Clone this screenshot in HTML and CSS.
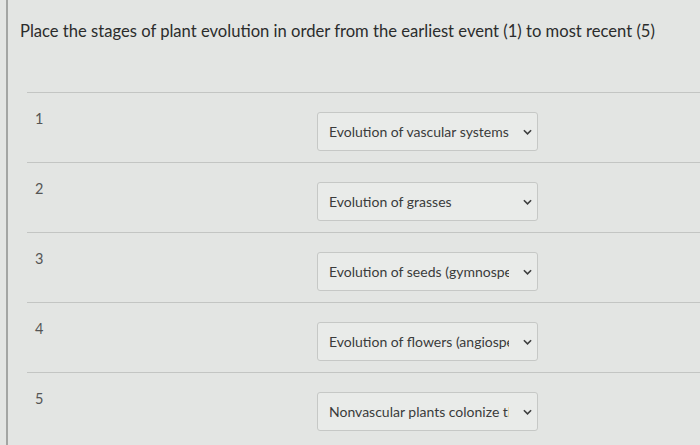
FILE: index.html
```html
<!DOCTYPE html>
<html lang="en">
<head>
  <meta charset="UTF-8" />
  <meta name="viewport" content="width=device-width, initial-scale=1.0"/>
  <title>Plant Evolution Ordering</title>
  <link rel="stylesheet" href="styles.css">
</head>
<body>
  <div class="question">
    <p class="question-text">Place the stages of plant evolution in order from the earliest event (1) to most recent (5)</p>

    <div class="answers">
      <div class="answer-row">
        <span class="num">1</span>
        <div class="dropdown">
          <span class="value">Evolution of vascular systems</span>
          <svg class="chevron" viewBox="0 0 10 6" width="9" height="6"><path d="M1 1l4 4 4-4" /></svg>
        </div>
      </div>
      <div class="answer-row">
        <span class="num">2</span>
        <div class="dropdown">
          <span class="value">Evolution of grasses</span>
          <svg class="chevron" viewBox="0 0 10 6" width="9" height="6"><path d="M1 1l4 4 4-4" /></svg>
        </div>
      </div>
      <div class="answer-row">
        <span class="num">3</span>
        <div class="dropdown">
          <span class="value">Evolution of seeds (gymnosperms)</span>
          <svg class="chevron" viewBox="0 0 10 6" width="9" height="6"><path d="M1 1l4 4 4-4" /></svg>
        </div>
      </div>
      <div class="answer-row">
        <span class="num">4</span>
        <div class="dropdown">
          <span class="value">Evolution of flowers (angiosperms)</span>
          <svg class="chevron" viewBox="0 0 10 6" width="9" height="6"><path d="M1 1l4 4 4-4" /></svg>
        </div>
      </div>
      <div class="answer-row">
        <span class="num">5</span>
        <div class="dropdown">
          <span class="value">Nonvascular plants colonize the land</span>
          <svg class="chevron" viewBox="0 0 10 6" width="9" height="6"><path d="M1 1l4 4 4-4" /></svg>
        </div>
      </div>
    </div>
  </div>
</body>
</html>
```

FILE: styles.css
```css
* {
  box-sizing: border-box;
  margin: 0;
  padding: 0;
}

body {
  background: #e3e5e3;
  font-family: Lato, "Liberation Sans", sans-serif;
  color: #2f3030;
  height: 445px;
  overflow: hidden;
}

.question {
  margin-left: 6px;
  border-left: 2px solid #a3a5a3;
  min-height: 445px;
}

.question-text {
  font-size: 16.6px;
  padding: 21px 0 0 12px;
  height: 92px;
  color: #2b2c2c;
}

.answers {
  margin-left: 19px;
}

.answer-row {
  display: grid;
  grid-template-columns: 290px 221px;
  height: 70px;
  border-top: 1px solid #c3c5c3;
}

.num {
  font-size: 14.5px;
  color: #555;
  padding: 17px 0 0 8px;
}

.dropdown {
  display: flex;
  align-items: center;
  height: 39px;
  margin-top: 19px;
  padding: 0 5px 0 11px;
  background: #e9ebe9;
  border: 1px solid #c6c8c6;
  border-radius: 3px;
}

.value {
  flex: 1;
  font-size: 14px;
  color: #3a3b3b;
  white-space: nowrap;
  overflow: hidden;
  margin-right: 14px;
}

.chevron {
  fill: none;
  stroke: #3d3e3e;
  stroke-width: 1.8;
}
```
